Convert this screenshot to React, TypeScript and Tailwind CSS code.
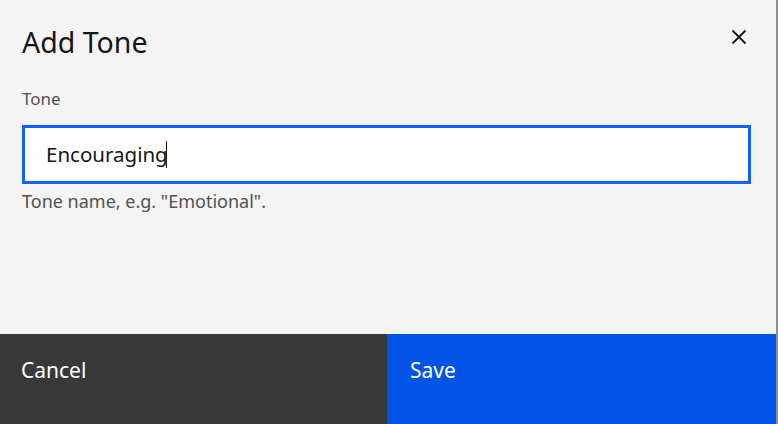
import React from "react";

export default function App() {
  return (
    <div className="w-[778px] h-[424px] bg-[#8d8d8d] overflow-hidden" style={{ fontFamily: '"Noto Sans", sans-serif' }}>
      <div className="w-[776px] h-[424px] bg-[#f4f4f4] flex flex-col">
        <div className="flex items-start justify-between pl-[22px] pr-[27px] pt-[24px]">
          <h2 className="text-[28.5px] leading-[36px] text-[#161616] font-normal">Add Tone</h2>
          <button className="mt-[3px] w-[20px] h-[20px] flex items-center justify-center text-[#161616]" aria-label="Close">
            <svg width="16" height="16" viewBox="0 0 16 16" fill="none">
              <path d="M1.5 1.5L14.5 14.5M14.5 1.5L1.5 14.5" stroke="#161616" strokeWidth="1.8" />
            </svg>
          </button>
        </div>
        <div className="flex flex-col px-[22px] pr-[25px] pt-[29px] flex-1">
          <label className="text-[17px] leading-[20px] text-[#525252]">Tone</label>
          <div className="mt-[16px] h-[59px] bg-white border-[3px] border-[#0f62fe] flex items-center pl-[21px]">
            <span className="text-[20.5px] leading-[27px] text-[#161616]">Encouraging</span>
            <span className="w-px h-[27px] bg-[#161616] -ml-[2px]" />
          </div>
          <div className="mt-[6px] text-[18px] leading-[22px] text-[#525252]">Tone name, e.g. "Emotional".</div>
        </div>
        <div className="h-[90px] flex">
          <button className="w-[387px] h-full bg-[#393939] text-white text-left text-[21px] leading-[24px] pl-[21px] pt-[24px] flex items-start">
            Cancel
          </button>
          <button className="flex-1 h-full bg-[#0353e9] text-white text-left text-[21px] leading-[24px] pl-[23px] pt-[24px] flex items-start">
            Save
          </button>
        </div>
      </div>
    </div>
  );
}
